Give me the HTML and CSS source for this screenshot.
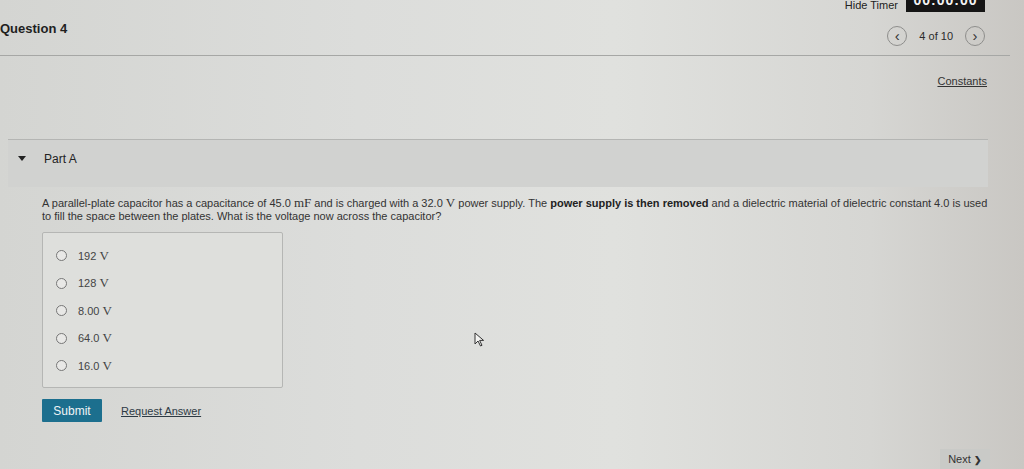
FILE: index.html
```html
<!DOCTYPE html>
<html>
<head>
<meta charset="utf-8">
<link rel="stylesheet" href="styles.css">
</head>
<body>
<div class="page">
  <header class="top">
    <div class="qtitle">Question 4</div>
    <div class="topright">
      <div class="timer-row">
        <span class="hide-timer">Hide Timer</span>
        <span class="timer">00:00:00</span>
      </div>
      <div class="nav-row">
        <span class="circ">&#x2039;</span>
        <span class="count">4 of 10</span>
        <span class="circ">&#x203A;</span>
      </div>
    </div>
  </header>
  <div class="constants-row"><a class="constants">Constants</a></div>
  <section class="part">
    <div class="part-head"><span class="tri"></span><span class="part-title">Part A</span></div>
    <div class="part-body">
      <p class="question">A parallel-plate capacitor has a capacitance of 45.0 <span class="m">mF</span> and is charged with a 32.0 <span class="m">V</span> power supply. The <b>power supply is then removed</b> and a dielectric material of dielectric constant 4.0 is used<br>to fill the space between the plates. What is the voltage now across the capacitor?</p>
      <div class="options">
        <label class="opt"><span class="radio"></span><span>192 <span class="m">V</span></span></label>
        <label class="opt"><span class="radio"></span><span>128 <span class="m">V</span></span></label>
        <label class="opt"><span class="radio"></span><span>8.00 <span class="m">V</span></span></label>
        <label class="opt"><span class="radio"></span><span>64.0 <span class="m">V</span></span></label>
        <label class="opt"><span class="radio"></span><span>16.0 <span class="m">V</span></span></label>
      </div>
      <div class="actions">
        <button class="submit">Submit</button>
        <a class="request">Request Answer</a>
      </div>
    </div>
  </section>
  <div class="bottom">
    <span class="feedback">Provide Feedback</span>
    <button class="next">Next <span class="chev">&#x276F;</span></button>
  </div>
  <svg class="cursor" width="12" height="16" viewBox="0 0 12 16"><path d="M1 1 L1 12 L4 9 L6.5 14 L8 13.3 L5.6 8.4 L9.6 8.4 Z" fill="#f4f4f2" stroke="#333" stroke-width="1"/></svg>
</div>
</body>
</html>
```
FILE: styles.css
```css
html, body {
  margin: 0;
  padding: 0;
  width: 1024px;
  height: 469px;
  overflow: hidden;
}
body {
  font-family: "Liberation Sans", Arial, sans-serif;
  color: #2b2b2b;
  background: linear-gradient(to right, #d4d5d2 0%, #dcdddb 35%, #e0e1de 60%, #d6d6d3 85%, #c9c7c3 100%);
}
.page {
  position: relative;
  width: 1024px;
  height: 469px;
}
.top {
  display: flex;
  justify-content: space-between;
  height: 56px;
  margin-right: 14px;
  border-bottom: 1px solid #a6a7a5;
  box-sizing: border-box;
}
.qtitle {
  font-size: 13px;
  font-weight: bold;
  color: #1f1f1f;
  padding-top: 21px;
  line-height: 16px;
}
.topright {
  display: flex;
  flex-direction: column;
  align-items: flex-end;
  width: 170px;
  padding-right: 25px;
}
.timer-row {
  display: flex;
  align-items: flex-start;
  margin-top: -8px;
  gap: 8px;
}
.hide-timer {
  font-size: 11px;
  line-height: 14px;
  padding-top: 6px;
  color: #222;
}
.timer {
  display: block;
  background: #151515;
  color: #f2f2f2;
  font-size: 14px;
  font-weight: bold;
  letter-spacing: 1px;
  width: 79px;
  height: 20px;
  line-height: 16px;
  text-align: center;
}
.nav-row {
  display: flex;
  align-items: center;
  margin-top: 14px;
}
.circ {
  width: 20px;
  height: 20px;
  border: 1px solid #8e8e8c;
  border-radius: 50%;
  display: flex;
  align-items: center;
  justify-content: center;
  font-size: 15px;
  line-height: 15px;
  color: #333;
  box-sizing: border-box;
  padding-bottom: 2px;
}
.count {
  font-size: 11px;
  margin: 0 12px;
  color: #2b2b2b;
}
.constants-row {
  display: flex;
  justify-content: flex-end;
  padding: 19px 37px 0 0;
  height: 66px;
  box-sizing: border-box;
}
.constants {
  font-size: 11px;
  text-decoration: underline;
  color: #333;
}
.part {
  margin: 17px 36px 0 8px;
}
.part-head {
  display: flex;
  align-items: center;
  height: 48px;
  border-top: 1px solid #b4b5b3;
  background: #d1d2d0;
  box-sizing: border-box;
  padding-bottom: 10px;
}
.tri {
  width: 0;
  height: 0;
  border-left: 4px solid transparent;
  border-right: 4px solid transparent;
  border-top: 5px solid #222;
  margin-left: 10px;
}
.part-title {
  font-size: 12px;
  margin-left: 18px;
  color: #222;
}
.part-body {
  padding: 9px 0 0 34px;
}
.question {
  margin: 0;
  font-size: 11px;
  line-height: 13px;
  color: #333;
  white-space: nowrap;
}
.question b {
  color: #222;
}
.m {
  font-family: "Liberation Serif", "Times New Roman", serif;
  font-size: 13px;
}
.options {
  margin-top: 9px;
  width: 241px;
  height: 156px;
  box-sizing: border-box;
  border: 1px solid #b5b6b4;
  border-radius: 2px;
  background: #dedfdc;
  padding: 15px 0 0 13px;
  display: flex;
  flex-direction: column;
  gap: 12.6px;
}
.opt {
  display: flex;
  align-items: center;
  gap: 11px;
  font-size: 11px;
  color: #444;
  height: 15px;
}
.radio {
  width: 9px;
  height: 9px;
  border: 1px solid #777;
  border-radius: 50%;
  background: #e8e8e6;
}
.actions {
  display: flex;
  align-items: center;
  margin-top: 11px;
  gap: 19px;
}
.submit {
  background: #1c6f8e;
  color: #f0f4f6;
  border: none;
  font-family: "Liberation Sans", Arial, sans-serif;
  font-size: 12px;
  width: 60px;
  height: 23px;
  padding: 0;
  border-radius: 1px;
}
.request {
  font-size: 11px;
  color: #2d3a44;
  text-decoration: underline;
  padding-top: 1px;
}
.bottom {
  position: relative;
  height: 40px;
  margin-top: 24px;
}
.feedback {
  position: absolute;
  left: 8px;
  top: 38px;
  font-size: 12px;
  color: #333;
}
.next {
  position: absolute;
  left: 940px;
  top: 3px;
  width: 50px;
  height: 24px;
  border: none;
  background: #c9cac7;
  color: #333;
  font-family: "Liberation Sans", Arial, sans-serif;
  font-size: 11px;
  padding: 0 0 4px 0;
}
.chev {
  font-size: 9px;
  font-weight: bold;
}
.cursor {
  position: absolute;
  left: 474px;
  top: 332px;
}
```
